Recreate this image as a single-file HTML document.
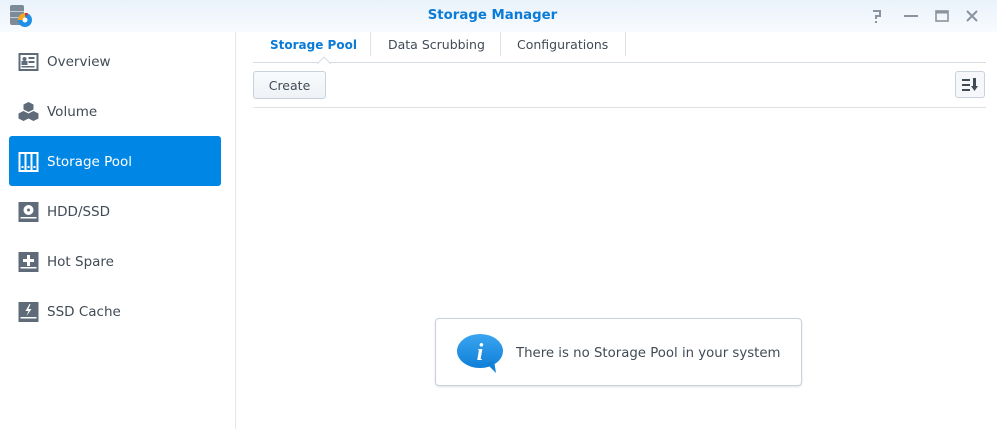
<!DOCTYPE html>
<html><head><meta charset="utf-8"><style>
*{margin:0;padding:0;box-sizing:border-box}
body{width:997px;height:429px;overflow:hidden;background:#fff;font-family:"DejaVu Sans",sans-serif;position:relative;color:#414b55}
.title{position:absolute;left:0;top:0;width:997px;height:32px;background:linear-gradient(#e9f2fb,#f8fbfe);}
.title .t{position:absolute;left:-6px;width:997px;top:8px;text-align:center;color:#0a7bd6;font-weight:bold;font-size:13.3px}
.side{position:absolute;left:0;top:32px;width:236px;height:397px;border-right:1px solid #e3e6ea}
.item{position:absolute;left:9px;width:212px;height:50px;font-size:13.5px;color:#414b55}
.item span{position:absolute;left:38px;top:22px}
.item.sel{background:#0086e5;color:#fff;border-radius:3px}
.ic{position:absolute;left:9px;top:20px;width:21px;height:20px}
.tabs{position:absolute;left:253px;top:32px;width:733px;height:31px;border-bottom:1px solid #d8dde3}
.tab{position:absolute;top:5px;font-size:12.5px;color:#414b55}
.sep{position:absolute;top:0;width:1px;height:24px;background:#dde2e7}
.btn{position:absolute;left:253px;top:71px;width:73px;height:28px;border:1px solid #c9d2dc;border-radius:3px;background:linear-gradient(#f8fafc,#eef2f6);font-size:12.5px;text-align:center;line-height:27px}
.sbtn{position:absolute;left:955px;top:71px;width:30px;height:27px;border:1px solid #c9d2dc;border-radius:3px;background:#f5f7fa}
.line2{position:absolute;left:253px;top:107px;width:733px;height:1px;background:#dde2e7}
.msg{position:absolute;left:435px;top:318px;width:367px;height:68px;border:1px solid #c9d2dc;border-radius:4px;box-shadow:0 1px 2px rgba(0,0,0,.12);background:#fff}
.msg span{position:absolute;left:80px;top:27px;font-size:13.3px}
</style></head><body>
<div class="title"><div class="t">Storage Manager</div>
<svg style="position:absolute;left:9px;top:4px" width="24" height="24" viewBox="0 0 24 24"><rect x="1" y="1" width="14" height="20" rx="2" fill="#7d8b99"/><rect x="1" y="7" width="14" height="1" fill="#c5ccd3"/><rect x="1" y="13" width="14" height="1" fill="#c5ccd3"/><circle cx="16" cy="16" r="7" fill="#1e90e8"/><path d="M16 16 L16 9 A7 7 0 0 0 9 16Z" fill="#f5a623"/><path d="M16 9 L19 9 L17 13Z" fill="#e8262b"/><circle cx="16" cy="16" r="2.5" fill="#fff"/></svg>
<svg style="position:absolute;left:870px;top:8px" width="120" height="16" viewBox="0 0 120 16" stroke="#8a949e" stroke-width="2" fill="none"><path d="M3 3h7v5H6v3M6 13v2"/><path d="M34 8h14"/><rect x="66" y="3" width="12" height="10" stroke-width="1.6"/><path d="M66 4h12" stroke-width="3"/><path d="M97 3l10 10M107 3l-10 10"/></svg>
</div>
<div class="side">
<div class="item" style="top:0px"><svg class="ic" viewBox="0 0 20 20"><rect x="0" y="1" width="20" height="18" fill="#5f6b78"/><rect x="2" y="3" width="16" height="14" fill="#fff"/><circle cx="6" cy="7" r="2" fill="#5f6b78"/><rect x="3" y="9" width="6" height="4" fill="#5f6b78"/><rect x="10" y="5" width="6" height="2" fill="#5f6b78"/><rect x="10" y="9" width="6" height="2" fill="#5f6b78"/><rect x="3" y="14" width="13" height="1.5" fill="#5f6b78"/></svg><span>Overview</span></div>
<div class="item" style="top:50px"><svg class="ic" viewBox="0 0 20 20" fill="#5f6b78"><path d="M10 0l5 2.5v5L10 10 5 7.5v-5z"/><path d="M5 9l5 2.5v5L5 19 0 16.5v-5z"/><path d="M15 9l5 2.5v5L15 19l-5-2.5v-5z"/></svg><span>Volume</span></div>
<div class="item sel" style="top:104px"><svg class="ic" style="top:16px" viewBox="0 0 20 20"><rect x="0" y="0" width="20" height="20" fill="#fff"/><rect x="2" y="2" width="4" height="16" fill="#0086e5"/><rect x="8" y="2" width="4" height="16" fill="#0086e5"/><rect x="14" y="2" width="4" height="16" fill="#0086e5"/><rect x="3" y="14" width="2" height="2" fill="#fff"/><rect x="9" y="14" width="2" height="2" fill="#fff"/><rect x="15" y="14" width="2" height="2" fill="#fff"/></svg><span style="top:18px">Storage Pool</span></div>
<div class="item" style="top:150px"><svg class="ic" viewBox="0 0 20 20"><rect width="20" height="20" fill="#5f6b78"/><circle cx="10" cy="8" r="5" fill="#fff"/><circle cx="10" cy="8" r="1.5" fill="#5f6b78"/><rect x="2" y="15" width="16" height="1.5" fill="#fff"/></svg><span>HDD/SSD</span></div>
<div class="item" style="top:200px"><svg class="ic" viewBox="0 0 20 20"><rect width="20" height="20" fill="#5f6b78"/><path d="M8.5 3h3v4h4v3h-4v4h-3v-4h-4V7h4z" fill="#fff"/><rect x="2" y="15" width="16" height="1.5" fill="#fff"/></svg><span>Hot Spare</span></div>
<div class="item" style="top:250px"><svg class="ic" viewBox="0 0 20 20"><rect width="20" height="20" fill="#5f6b78"/><path d="M11 2L7 9h3l-2 5 5-7h-3l2-5z" fill="#fff"/><rect x="2" y="15" width="16" height="1.5" fill="#fff"/></svg><span>SSD Cache</span></div>
</div>
<div class="tabs">
<div class="tab" style="left:17px;color:#0a7bd6;font-weight:bold;font-size:12px;top:6px">Storage Pool</div>
<div class="sep" style="left:117px"></div>
<div class="tab" style="left:135px">Data Scrubbing</div>
<div class="sep" style="left:247px"></div>
<div class="tab" style="left:264px">Configurations</div>
<div class="sep" style="left:372px"></div>
<svg style="position:absolute;left:64px;top:24px" width="14" height="8"><path d="M0 8L7 1l7 7" fill="#fff" stroke="#d8dde3"/></svg>
</div>
<div class="btn">Create</div>
<div class="sbtn"><svg style="position:absolute;left:6px;top:5px" width="18" height="16" viewBox="0 0 18 16" fill="#414b55"><rect x="0" y="2" width="8" height="2"/><rect x="0" y="7" width="8" height="2"/><rect x="0" y="12" width="8" height="2"/><rect x="11" y="1" width="3" height="9"/><path d="M9 9h7l-3.5 5z"/></svg></div>
<div class="line2"></div>
<div class="msg"><svg style="position:absolute;left:20px;top:14px" width="48" height="42" viewBox="0 0 48 42"><defs><linearGradient id="g" x1="0" y1="0" x2="0" y2="1"><stop offset="0" stop-color="#3aa5f0"/><stop offset="1" stop-color="#0f7fd8"/></linearGradient></defs><ellipse cx="24" cy="18" rx="23" ry="17" fill="url(#g)"/><path d="M30 30l10 10-2-12z" fill="#0f7fd8"/><text x="24" y="27" text-anchor="middle" font-family="Liberation Serif,serif" font-style="italic" font-weight="bold" font-size="24" fill="#fff">i</text></svg><span>There is no Storage Pool in your system</span></div>
</body></html>
